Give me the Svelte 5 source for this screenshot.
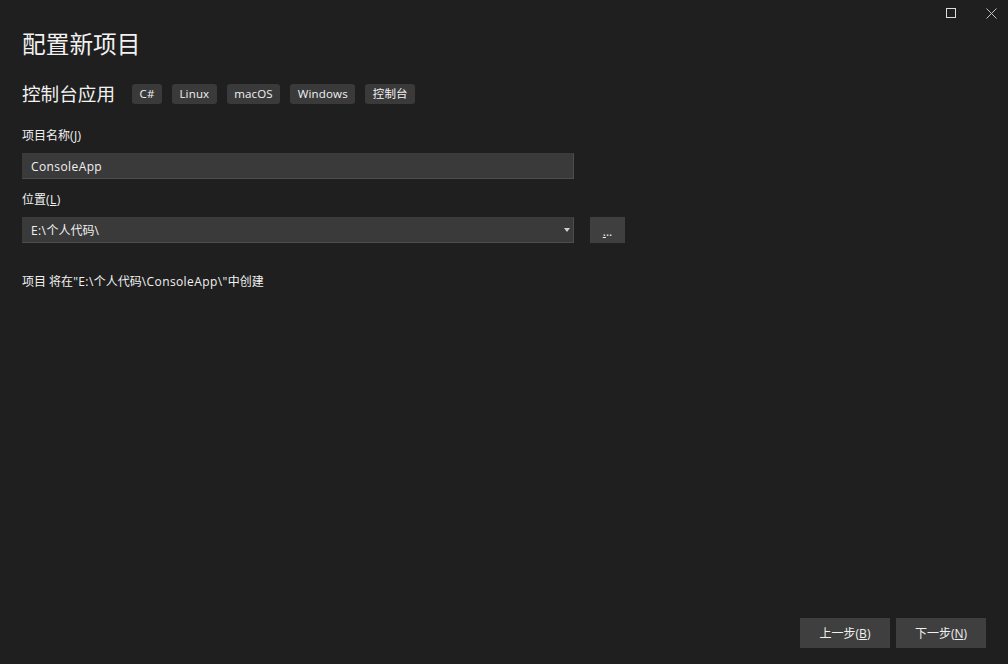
<script>
    const tags = ['C#', 'Linux', 'macOS', 'Windows', '控制台'];
    let name = 'ConsoleApp';
</script>

<div class="window">
    <div class="caption">
        <button class="cap" aria-label="Maximize">
            <svg viewBox="0 0 10 10" width="10" height="10"><rect x="0.5" y="0.5" width="9" height="9" fill="none" stroke="#dcdcdc" /></svg>
        </button>
        <button class="cap" aria-label="Close">
            <svg viewBox="0 0 11 11" width="11" height="11"><path d="M0.5 0.5 10.5 10.5M10.5 0.5 0.5 10.5" fill="none" stroke="#c4c4c4" stroke-width="1" /></svg>
        </button>
    </div>

    <main>
        <h1>配置新项目</h1>

        <div class="template">
            <h2>控制台应用</h2>
            <ul>
                {#each tags as tag}
                    <li>{tag}</li>
                {/each}
            </ul>
        </div>

        <label class="first" for="name">项目名称<span class="lat">(<u>J</u>)</span></label>
        <div class="row">
            <input id="name" class="field lat" bind:value={name} />
        </div>

        <label for="loc">位置<span class="lat">(<u>L</u>)</span></label>
        <div class="row">
            <div id="loc" class="field combo">
                <span><span class="lat">E:\</span>个人代码<span class="lat">\</span></span>
                <svg viewBox="0 0 6 4" width="6" height="4"><path d="M0 0h6L3 4z" fill="#d0d0d0" /></svg>
            </div>
            <button class="browse"><u>.</u>..</button>
        </div>

        <p class="note">项目 将在<span class="lat">"E:\</span>个人代码<span class="lat">\ConsoleApp\"</span>中创建</p>
    </main>

    <footer>
        <button class="nav">上一步(<u>B</u>)</button>
        <button class="nav">下一步(<u>N</u>)</button>
    </footer>
</div>

<style>
    :global(body) {
        margin: 0;
        background: #1f1f1f;
    }

    .window {
        display: flex;
        flex-direction: column;
        width: 1008px;
        height: 664px;
        overflow: hidden;
        background: #1f1f1f;
        color: #f1f1f1;
        font-family: "Open Sans", "Noto Sans CJK SC", sans-serif;
        font-size: 12px;
    }

    /* latin runs sit a little wider than Open Sans at this size */
    .lat {
        letter-spacing: 0.4px;
    }

    .caption {
        display: flex;
        justify-content: flex-end;
        gap: 6px;
        height: 26px;
    }

    .cap {
        display: grid;
        place-items: center;
        width: 34px;
        height: 26px;
        padding: 0;
        border: none;
        background: none;
    }

    main {
        flex: 1;
        padding: 0 22px;
    }

    h1 {
        margin: 0;
        height: 36px;
        font-size: 23.7px;
        font-weight: 400;
        line-height: 36px;
    }

    .template {
        display: flex;
        align-items: center;
        gap: 17px;
        margin-top: 18px;
        height: 28px;
    }

    h2 {
        margin: 0;
        font-size: 18.6px;
        font-weight: 400;
        line-height: 28px;
    }

    ul {
        display: flex;
        gap: 10px;
        margin: 0;
        padding: 0;
        list-style: none;
    }

    li {
        height: 20px;
        padding: 0 7.5px;
        border-radius: 3px;
        background: #3a3a3a;
        font-size: 11.5px;
        letter-spacing: 0.15px;
        line-height: 20px;
    }

    label {
        display: block;
        height: 17px;
        margin-top: 12px;
        line-height: 18px;
    }

    label.first {
        margin-top: 19px;
    }

    .row {
        display: flex;
        gap: 16px;
        margin-top: 9px;
    }

    .field {
        box-sizing: border-box;
        width: 552px;
        height: 26px;
        padding: 0 8px;
        border: 1px solid #3a3a3a;
        border-bottom-color: #4d4d4d;
        border-right-color: #4d4d4d;
        background: #3a3a3a;
        color: #f1f1f1;
        font: inherit;
        outline: none;
    }

    input.lat {
        letter-spacing: 0.4px;
    }

    .combo {
        display: flex;
        align-items: center;
        justify-content: space-between;
        padding-right: 3px;
    }

    .browse {
        width: 35px;
        height: 26px;
        padding: 3px 0 0;
        border: none;
        background: #3f3f3f;
        color: #f1f1f1;
        font: inherit;
    }

    .note {
        margin: 30px 0 0;
        line-height: 18px;
    }

    footer {
        display: flex;
        justify-content: flex-end;
        gap: 6px;
        padding: 0 22px 16px;
    }

    .nav {
        width: 90px;
        height: 30px;
        padding: 0;
        border: none;
        background: #3f3f3f;
        color: #f1f1f1;
        font: inherit;
    }
</style>
